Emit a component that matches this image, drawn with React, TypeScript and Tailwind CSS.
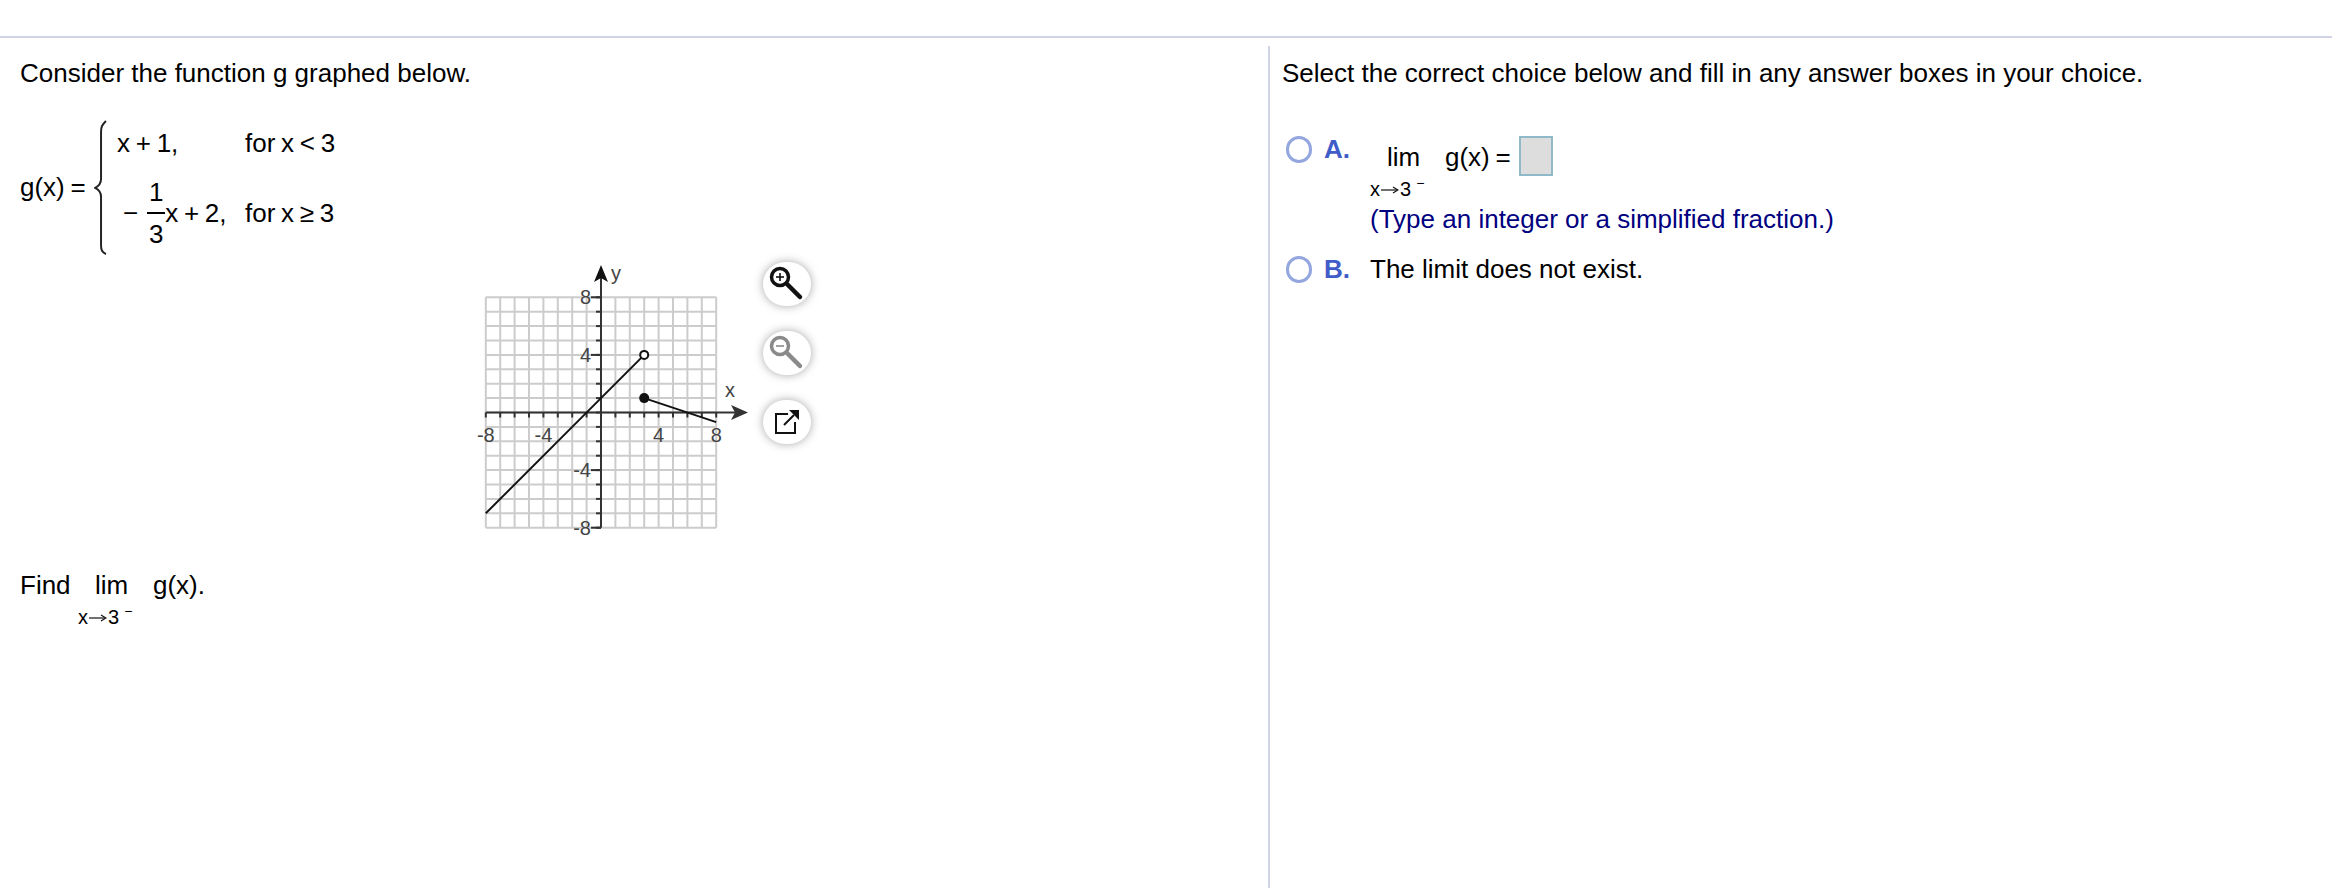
import React from 'react';

const ink = '#333333';
const u = 14.4;
const ox = 121;
const oy = 152.5;
const px = (v: number) => ox + v * u;
const py = (v: number) => oy - v * u;
const steps = Array.from({ length: 17 }, (_, i) => i - 8);

function Lim() {
  return (
    <div className="flex flex-col items-start w-[75px] shrink-0">
      <span className="leading-[30px] ml-[17px]">lim</span>
      <span className="flex items-center text-[20px] leading-[24px] mt-[5px]">
        x
        <svg width="18" height="10" viewBox="0 0 18 10" fill="none" stroke="#111111" className="mx-[1px] mt-[1px]">
          <line x1="0" y1="5" x2="16" y2="5" strokeWidth="1.2" />
          <path d="M12 2 L17 5 L12 8" strokeWidth="1.2" />
        </svg>
        3<span className="text-[14px] leading-[12px] ml-[5px] -mt-[12px]">−</span>
      </span>
    </div>
  );
}

function Graph() {
  return (
    <svg width="270" height="280" viewBox="0 0 270 280" className="block shrink-0 overflow-visible">
      {steps.map(v => (
        <g key={v} stroke="#cccccc" strokeWidth="2">
          <line x1={px(v)} y1={py(8)} x2={px(v)} y2={py(-8)} />
          <line x1={px(-8)} y1={py(v)} x2={px(8)} y2={py(v)} />
        </g>
      ))}
      <g stroke={ink} strokeWidth="2">
        <line x1={px(-8)} y1={oy} x2={258} y2={oy} />
        <line x1={ox} y1={py(-8)} x2={ox} y2={14} />
        {steps.map(v => (
          <g key={v}>
            <line x1={px(v)} y1={oy} x2={px(v)} y2={oy + 5} />
            <line x1={ox} y1={py(v)} x2={ox - 5} y2={py(v)} />
          </g>
        ))}
        <line x1={ox - 10} y1={py(8)} x2={ox} y2={py(8)} />
        <line x1={ox - 10} y1={py(4)} x2={ox} y2={py(4)} />
        <line x1={ox - 10} y1={py(-4)} x2={ox} y2={py(-4)} />
        <line x1={ox - 10} y1={py(-8)} x2={ox} y2={py(-8)} />
      </g>
      <path d="M268 152.5 L251 145 L255 152.5 L251 160 Z" fill={ink} />
      <path d="M121 5 L114 22 L121 18 L128 22 Z" fill="#111111" />
      <g fill="#444444" fontSize="20" fontFamily="'Liberation Sans', sans-serif">
        <text x={px(-8)} y="182" textAnchor="middle">-8</text>
        <text x={px(-4)} y="182" textAnchor="middle">-4</text>
        <text x={px(4)} y="182" textAnchor="middle">4</text>
        <text x={px(8)} y="182" textAnchor="middle">8</text>
        <text x="111" y={py(8) + 7} textAnchor="end">8</text>
        <text x="111" y={py(4) + 7} textAnchor="end">4</text>
        <text x="111" y={py(-4) + 7} textAnchor="end">-4</text>
        <text x="111" y={py(-8) + 7} textAnchor="end">-8</text>
        <text x="250" y="137" textAnchor="middle">x</text>
        <text x="131" y="20">y</text>
      </g>
      <line x1={px(-8)} y1={py(-7)} x2={px(3)} y2={py(4)} stroke="#111111" strokeWidth="2" />
      <circle cx={px(3)} cy={py(4)} r="4" fill="#ffffff" stroke="#111111" strokeWidth="2" />
      <line x1={px(3)} y1={py(1)} x2={px(8)} y2={py(-2 / 3)} stroke="#111111" strokeWidth="2" />
      <circle cx={px(3)} cy={py(1)} r="5" fill="#111111" />
    </svg>
  );
}

function Magnifier({ plus, color }: { plus: boolean; color: string }) {
  return (
    <svg width="36" height="36" viewBox="0 0 36 36" fill="none" stroke={color}>
      <circle cx="11" cy="11" r="8.5" strokeWidth="3.5" />
      <line x1="18" y1="18" x2="31" y2="31" strokeWidth="4.5" strokeLinecap="round" />
      <line x1="7" y1="11" x2="15" y2="11" strokeWidth="1.6" />
      {plus && <line x1="11" y1="7" x2="11" y2="15" strokeWidth="1.6" />}
    </svg>
  );
}

function ToolButton({ children }: { children: React.ReactNode }) {
  return (
    <button className="w-12 h-11 rounded-full bg-white flex items-center justify-center shadow-[0_0_10px_rgba(0,0,0,0.35)]">
      {children}
    </button>
  );
}

function Radio() {
  return <span className="block w-[26px] h-[27px] rounded-full border-[3px] border-[#93a7de] bg-white shrink-0" />;
}

export default function App() {
  return (
    <div className="w-[2332px] h-[888px] bg-white text-black text-[26px] font-['Liberation_Sans',sans-serif] overflow-hidden">
      <div className="h-[38px] border-b-2 border-[#d0d4e4]" />
      <div className="flex mt-2 h-[842px]">
        <div className="w-[1268px] shrink-0 pl-5 pt-3">
          <p className="leading-[30px]">Consider the function g graphed below.</p>

          <div className="flex items-center mt-8 h-[135px] [word-spacing:-1.5px]">
            <span className="w-[74px] shrink-0">g(x) =</span>
            <svg width="19" height="135" viewBox="0 0 19 137" fill="none" stroke="#222222" strokeWidth="2" className="shrink-0">
              <path d="M12 1 C8 5 7 7 7 12 L7 60 C7 65 5 67 1 69 C5 71 7 73 7 78 L7 127 C7 132 8 134 12 136" />
            </svg>
            <div className="grid grid-cols-[128px_auto] ml-1 self-start -mt-3">
              <span className="h-[70px] flex items-center">x + 1,</span>
              <span className="h-[70px] flex items-center">for x &lt; 3</span>
              <span className="h-[70px] flex items-center">
                <span className="ml-[6px] mr-[9px]">−</span>
                <span className="flex flex-col items-center text-center leading-[30px] gap-[5px]">
                  <span>1</span>
                  <span className="h-[2px] w-[18px] bg-black" />
                  <span>3</span>
                </span>
                <span>x + 2,</span>
              </span>
              <span className="h-[70px] flex items-center">for x ≥ 3</span>
            </div>
          </div>

          <div className="flex items-start pl-[460px] mt-[5px] h-[290px]">
            <Graph />
            <div className="flex flex-col gap-[25px] ml-[13px] mt-[2px]">
              <ToolButton><Magnifier plus color="#111111" /></ToolButton>
              <ToolButton><Magnifier plus={false} color="#8a8a8a" /></ToolButton>
              <ToolButton>
                <svg width="28" height="28" viewBox="0 0 28 28" fill="none" stroke="#111111">
                  <path d="M15 6 L3 6 L3 25 L22 25 L22 14" strokeWidth="2" />
                  <line x1="11" y1="17" x2="21" y2="7" strokeWidth="2" />
                  <path d="M16 2 L26 2 L26 12 Z" fill="#111111" stroke="none" />
                </svg>
              </ToolButton>
            </div>
          </div>

          <div className="flex mt-5">
            <span className="leading-[30px] w-[58px] shrink-0">Find</span>
            <Lim />
            <span className="leading-[30px]">g(x).</span>
          </div>
        </div>

        <div className="flex-1 border-l-2 border-[#d0d4e4] pl-3 pt-3">
          <p className="leading-[30px]">Select the correct choice below and fill in any answer boxes in your choice.</p>

          <div className="flex mt-[48px] ml-1">
            <Radio />
            <span className="ml-[12px] font-bold text-[#3f5cc8] w-[46px] leading-[26px]">A.</span>
            <div>
              <div className="flex items-start">
                <div className="mt-[6px]"><Lim /></div>
                <span className="mt-[6px] leading-[30px] [word-spacing:-1.5px]">g(x) =</span>
                <span className="ml-[8px] block w-[34px] h-[40px] bg-[#dddddd] border-2 border-[#8fb9c9]" />
              </div>
              <p className="text-[#000080] leading-[30px] mt-[3px]">(Type an integer or a simplified fraction.)</p>
            </div>
          </div>

          <div className="flex items-center mt-4 ml-1">
            <Radio />
            <span className="ml-[12px] font-bold text-[#3f5cc8] w-[46px]">B.</span>
            <span>The limit does not exist.</span>
          </div>
        </div>
      </div>
    </div>
  );
}
